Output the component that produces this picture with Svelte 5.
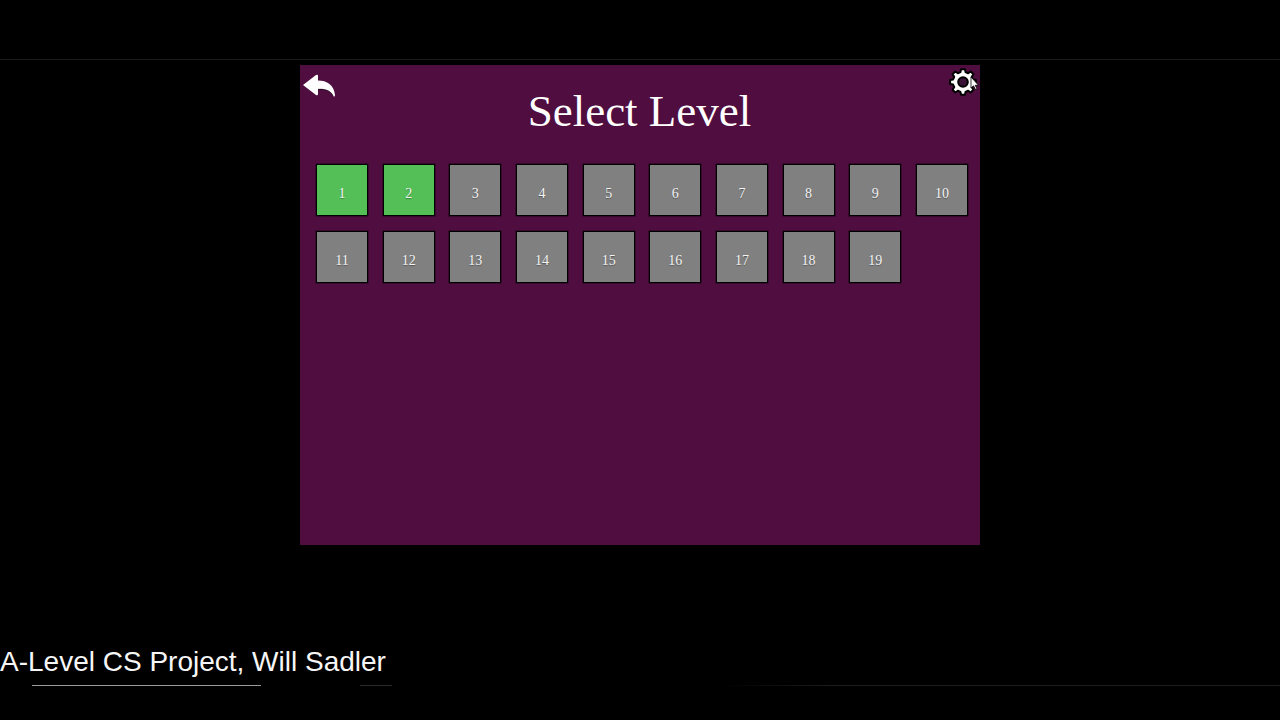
<script>
  const levels = Array.from({ length: 19 }, (_, i) => ({ n: i + 1, done: i < 2 }));

  const teeth = 8;
  const gearPoints = [];
  for (let i = 0; i < teeth; i++) {
    const c = (i * 2 * Math.PI) / teeth;
    const step = (2 * Math.PI) / teeth;
    const spots = [
      [-0.32, 10.2],
      [-0.19, 13],
      [0.19, 13],
      [0.32, 10.2]
    ];
    for (const [t, r] of spots) {
      const a = c + t * step;
      gearPoints.push(`${(15 + r * Math.cos(a)).toFixed(2)},${(15 + r * Math.sin(a)).toFixed(2)}`);
    }
  }
  const gear = gearPoints.join(" ");
</script>

<div class="page">
  <div class="topbar"></div>
  <main class="panel">
    <button class="icon back" aria-label="Back">
      <svg viewBox="0 0 34 26" width="34" height="26">
        <path d="M1 12 L14 2 Q16 1 16 3 L16 7.500 C25 7.500 32 12 33 22 C33 24 31.500 24 31 22.500 C29 18 24 15.500 16 16 L16 21 Q16 23 14 22 Z" fill="#fff" />
        <path d="M31 22.800 C29 18.200 24 15.800 16 16.300" fill="none" stroke="#000" stroke-width="1" opacity=".55" />
      </svg>
    </button>
    <button class="icon gear" aria-label="Settings">
      <svg viewBox="0 0 30 30" width="30" height="30">
        <polygon points={gear} fill="#fff" stroke="#000" stroke-width="2" stroke-linejoin="round" />
        <circle cx="15" cy="15" r="4.800" fill="#3a1235" stroke="#000" stroke-width="2" />
      </svg>
    </button>
    <svg class="cursor" viewBox="0 0 10 16" width="10" height="16">
      <path d="M1 1 V12 L3.500 9.800 L5.500 13.500 L7 12.800 L5.200 9.300 H8.500 Z" fill="#fff" stroke="#000" stroke-width="0.800" />
    </svg>

    <h1>Select Level</h1>
    <div class="grid">
      {#each levels as l}
        <button class="tile" class:done={l.done}>{l.n}</button>
      {/each}
    </div>
  </main>
  <footer>
    <p>A-Level CS Project, Will Sadler</p>
    <div class="rule">
      <span class="a"></span>
      <span class="b"></span>
      <span class="c"></span>
    </div>
  </footer>
</div>

<style>
  :global(body) {
    margin: 0;
    background: #000;
  }
  .page {
    height: 720px;
    display: flex;
    flex-direction: column;
    align-items: center;
    overflow: hidden;
    background: #000;
  }
  .topbar {
    flex: none;
    width: 100%;
    height: 59px;
    border-bottom: 1px solid #1a1a1a;
  }
  .panel {
    position: relative;
    flex: none;
    width: 680px;
    height: 480px;
    margin-top: 5px;
    background: #500d40;
    box-sizing: border-box;
    padding: 24px 12px 0 16px;
  }
  h1 {
    margin: 0 0 0 -5px;
    height: 75px;
    font: 400 45px/44px "Liberation Serif", serif;
    text-align: center;
    color: #fff;
  }
  .grid {
    display: grid;
    grid-template-columns: repeat(10, 52px);
    justify-content: space-between;
    row-gap: 15px;
  }
  .tile {
    width: 52px;
    height: 52px;
    padding: 8px 0 0;
    box-sizing: border-box;
    border: 1px solid #000;
    box-shadow: 0 0 0 0.500px rgba(0, 0, 0, 0.6);
    background: #808080;
    color: #f4f4f4;
    font: 400 14px "Liberation Serif", serif;
    text-shadow: 0 1px 1px rgba(0, 0, 0, 0.35);
  }
  .tile.done {
    background: #53bf56;
  }
  .icon {
    position: absolute;
    padding: 0;
    border: 0;
    background: none;
    line-height: 0;
  }
  .back {
    left: 2px;
    top: 8px;
  }
  .gear {
    left: 648px;
    top: 2px;
  }
  .cursor {
    position: absolute;
    left: 670px;
    top: 11px;
  }
  footer {
    flex: none;
    width: 100%;
    margin-top: 99px;
  }
  p {
    margin: 0;
    height: 41px;
    font: 400 28px/36px "Liberation Sans", sans-serif;
    color: #f6f6f6;
  }
  .rule {
    display: flex;
    height: 1px;
  }
  .rule span {
    display: block;
    height: 1px;
  }
  .a {
    width: 229px;
    margin-left: 32px;
    background: #9a9a9a;
  }
  .b {
    width: 32px;
    margin-left: 99px;
    background: #2a2a2a;
  }
  .c {
    flex: 1;
    margin-left: 328px;
    background: linear-gradient(90deg, #000, #1c1c1c 20%);
  }
</style>
